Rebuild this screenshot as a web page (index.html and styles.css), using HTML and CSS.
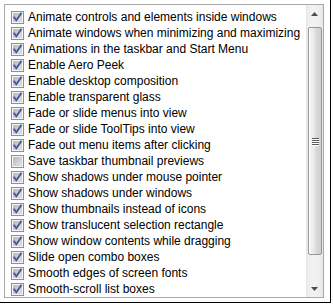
FILE: index.html
```html
<!DOCTYPE html>
<html>
<head>
<meta charset="utf-8">
<link rel="stylesheet" href="styles.css">
</head>
<body>
<svg class="defs" width="0" height="0">
  <defs>
    <linearGradient id="cbfill" x1="0" y1="0" x2="1" y2="1">
      <stop offset="0" stop-color="#aeb3b9"/>
      <stop offset="1" stop-color="#ebebec"/>
    </linearGradient>
    <symbol id="cbbox" viewBox="0 0 13 13">
      <rect x="0.5" y="0.5" width="12" height="12" fill="#f4f4f4" stroke="#8e8f8f"/>
      <rect x="2" y="2" width="9" height="9" fill="url(#cbfill)"/>
      <rect x="2.5" y="2.5" width="8" height="8" fill="none" stroke="#c7cbd0" stroke-opacity="0.6"/>
    </symbol>
    <symbol id="cbcheck" viewBox="0 0 13 13">
      <path d="M3.2 6.4 L5.3 9.2 L10 2.6" fill="none" stroke="#455a93" stroke-width="1.8" stroke-linecap="square" stroke-linejoin="miter"/>
    </symbol>
  </defs>
</svg>
<div class="frame">
  <div class="list">
    <ul class="items">
      <li class="item"><svg class="cb" viewBox="0 0 13 13"><use href="#cbbox"/><use href="#cbcheck"/></svg><span class="label">Animate controls and elements inside windows</span></li>
      <li class="item"><svg class="cb" viewBox="0 0 13 13"><use href="#cbbox"/><use href="#cbcheck"/></svg><span class="label">Animate windows when minimizing and maximizing</span></li>
      <li class="item"><svg class="cb" viewBox="0 0 13 13"><use href="#cbbox"/><use href="#cbcheck"/></svg><span class="label">Animations in the taskbar and Start Menu</span></li>
      <li class="item"><svg class="cb" viewBox="0 0 13 13"><use href="#cbbox"/><use href="#cbcheck"/></svg><span class="label">Enable Aero Peek</span></li>
      <li class="item"><svg class="cb" viewBox="0 0 13 13"><use href="#cbbox"/><use href="#cbcheck"/></svg><span class="label">Enable desktop composition</span></li>
      <li class="item"><svg class="cb" viewBox="0 0 13 13"><use href="#cbbox"/><use href="#cbcheck"/></svg><span class="label">Enable transparent glass</span></li>
      <li class="item"><svg class="cb" viewBox="0 0 13 13"><use href="#cbbox"/><use href="#cbcheck"/></svg><span class="label">Fade or slide menus into view</span></li>
      <li class="item"><svg class="cb" viewBox="0 0 13 13"><use href="#cbbox"/><use href="#cbcheck"/></svg><span class="label">Fade or slide ToolTips into view</span></li>
      <li class="item"><svg class="cb" viewBox="0 0 13 13"><use href="#cbbox"/><use href="#cbcheck"/></svg><span class="label">Fade out menu items after clicking</span></li>
      <li class="item"><svg class="cb" viewBox="0 0 13 13"><use href="#cbbox"/></svg><span class="label">Save taskbar thumbnail previews</span></li>
      <li class="item"><svg class="cb" viewBox="0 0 13 13"><use href="#cbbox"/><use href="#cbcheck"/></svg><span class="label">Show shadows under mouse pointer</span></li>
      <li class="item"><svg class="cb" viewBox="0 0 13 13"><use href="#cbbox"/><use href="#cbcheck"/></svg><span class="label">Show shadows under windows</span></li>
      <li class="item"><svg class="cb" viewBox="0 0 13 13"><use href="#cbbox"/><use href="#cbcheck"/></svg><span class="label">Show thumbnails instead of icons</span></li>
      <li class="item"><svg class="cb" viewBox="0 0 13 13"><use href="#cbbox"/><use href="#cbcheck"/></svg><span class="label">Show translucent selection rectangle</span></li>
      <li class="item"><svg class="cb" viewBox="0 0 13 13"><use href="#cbbox"/><use href="#cbcheck"/></svg><span class="label">Show window contents while dragging</span></li>
      <li class="item"><svg class="cb" viewBox="0 0 13 13"><use href="#cbbox"/><use href="#cbcheck"/></svg><span class="label">Slide open combo boxes</span></li>
      <li class="item"><svg class="cb" viewBox="0 0 13 13"><use href="#cbbox"/><use href="#cbcheck"/></svg><span class="label">Smooth edges of screen fonts</span></li>
      <li class="item"><svg class="cb" viewBox="0 0 13 13"><use href="#cbbox"/><use href="#cbcheck"/></svg><span class="label">Smooth-scroll list boxes</span></li>
    </ul>
    <div class="scrollbar">
      <div class="sb-btn">
        <svg width="7" height="4" viewBox="0 0 7 4"><path d="M3.5 0 L7 4 L0 4 Z" fill="#4d4d4d"/></svg>
      </div>
      <div class="sb-track">
        <div class="thumb">
          <div class="grip"><i></i><i></i><i></i><i></i></div>
        </div>
      </div>
      <div class="sb-btn">
        <svg width="7" height="4" viewBox="0 0 7 4"><path d="M0 0 L7 0 L3.5 4 Z" fill="#4d4d4d"/></svg>
      </div>
    </div>
  </div>
</div>
</body>
</html>
```

FILE: styles.css
```css
html, body {
  margin: 0;
  padding: 0;
  background: #ffffff;
}

.defs {
  position: absolute;
  width: 0;
  height: 0;
}

.frame {
  width: 330px;
  height: 302px;
  border-right: 1px solid #000000;
  border-bottom: 1px solid #000000;
  background: #ffffff;
  box-sizing: content-box;
  padding: 0;
  overflow: hidden;
}

.list {
  margin: 4px 0 0 4px;
  width: 318px;
  height: 292px;
  border: 1px solid #a9a9a9;
  display: flex;
  overflow: hidden;
  background: #ffffff;
}

.items {
  list-style: none;
  margin: 0;
  padding: 4px 0 0 6px;
  flex: 1;
  overflow: hidden;
  font-family: "Liberation Sans", Arial, sans-serif;
  font-size: 12px;
  color: #000000;
}

.item {
  height: 16px;
  display: flex;
  align-items: center;
  gap: 4px;
  white-space: nowrap;
}

.cb {
  width: 13px;
  height: 13px;
  flex: none;
}

.label {
  line-height: 16px;
}

.scrollbar {
  width: 17px;
  flex: none;
  display: flex;
  flex-direction: column;
  background: linear-gradient(to right, #e3e3e3 0, #eeeeee 2px, #f2f2f2 8px, #ececec 15px, #e6e6e6 17px);
}

.sb-btn {
  height: 17px;
  flex: none;
  display: flex;
  align-items: center;
  justify-content: center;
}

.sb-track {
  flex: 1;
  padding: 5px 1px 0 2px;
}

.thumb {
  height: 226px;
  border: 1px solid #979797;
  border-radius: 2px;
  background: linear-gradient(to right, #f4f4f4 0, #eaeaea 40%, #d9d9d9 60%, #cfcfcf 100%);
  box-shadow: inset 1px 0 0 #ffffff;
  display: flex;
  align-items: center;
  justify-content: center;
}

.grip {
  display: flex;
  flex-direction: column;
  gap: 1px;
}

.grip i {
  display: block;
  width: 7px;
  height: 1px;
  background: #5a5a5a;
  box-shadow: 0 1px 0 #ffffff;
}
```
